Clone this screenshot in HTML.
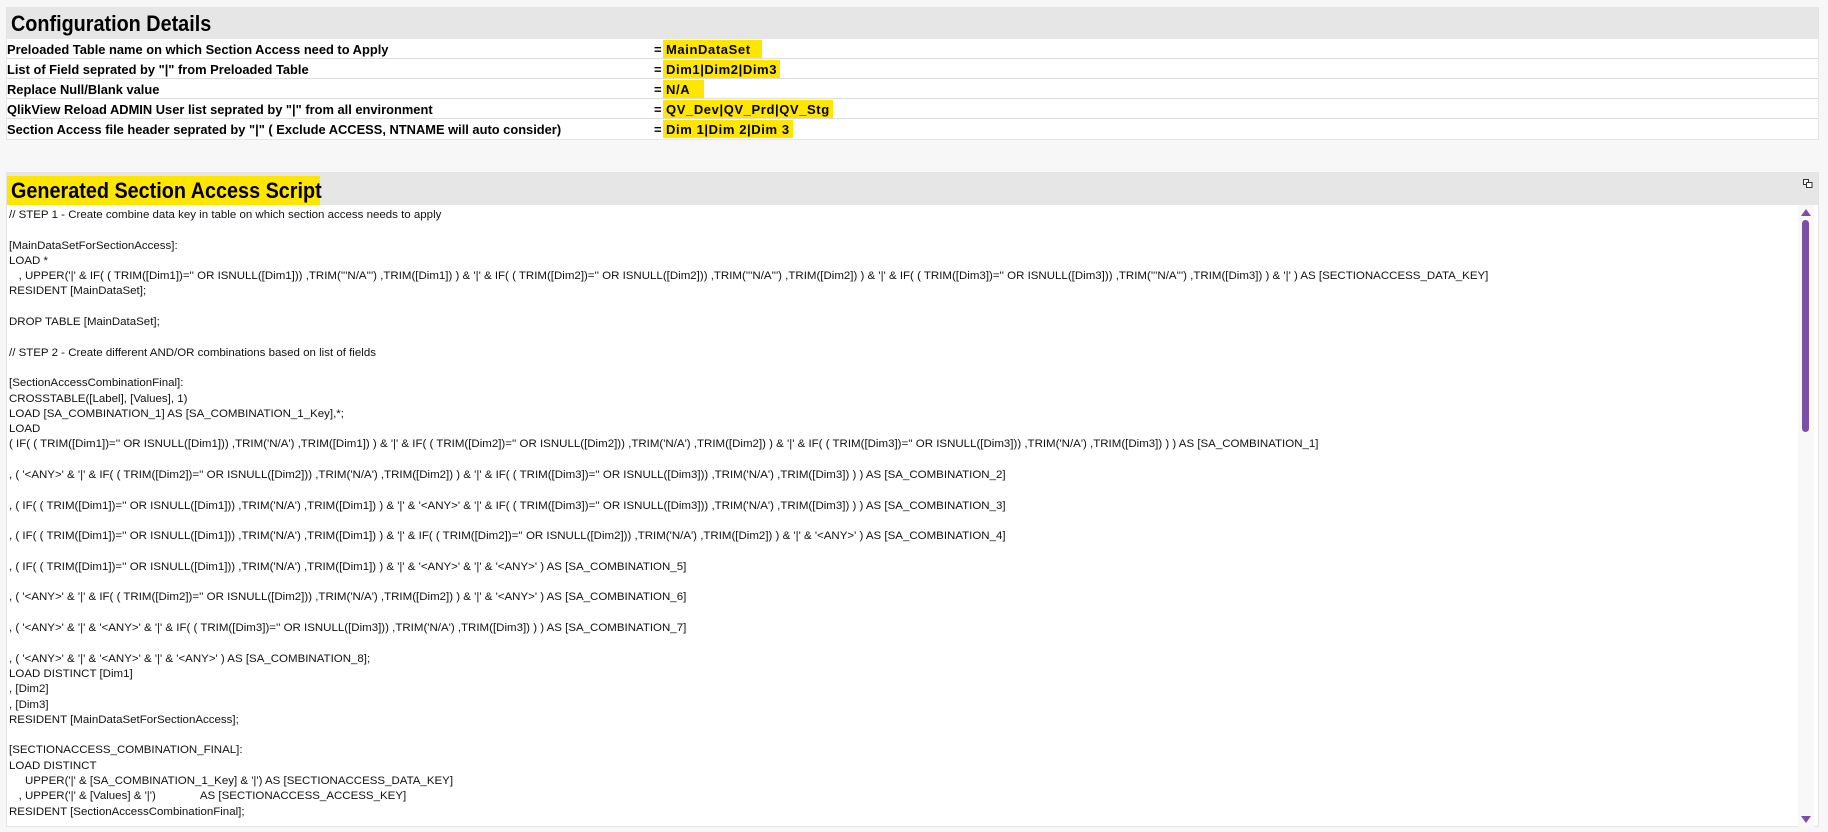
<!DOCTYPE html>
<html><head><meta charset="utf-8"><style>
*{margin:0;padding:0;box-sizing:border-box}
body{width:1828px;height:832px;background:#f7f7f7;font-family:"Liberation Sans",sans-serif;color:#000;position:relative;overflow:hidden}
.p1{position:absolute;left:6px;top:7px;width:1813px;height:133px;background:#fff;border:1px solid #e4e4e4}
.h{background:#e6e6e6;height:31px;position:relative}
.h1t{position:absolute;left:4px;top:3px;font-size:22px;font-weight:bold;transform:scaleX(.9);transform-origin:left}
.row{height:20px;border-bottom:1px solid #dcdcdc;position:relative;font-size:13px;font-weight:bold}
.row:last-child{border-bottom:none}
.lab{position:absolute;left:0;top:3px;transform:scaleX(.99);transform-origin:left;white-space:nowrap}
.eq{position:absolute;left:647px;top:3px}
.val{position:absolute;left:656px;top:1px;height:18px;background:#ffe600;padding:2px 3px 0 3px;white-space:nowrap;letter-spacing:.6px}
.p2{position:absolute;left:6px;top:172px;width:1813px;height:655px;background:#fff;border:1px solid #e4e4e4}
.h2{background:#e6e6e6;height:32px;position:relative}
.h2t{position:absolute;left:0;top:3px;height:29px;width:313px;background:#ffe600;}
.h2t span{position:absolute;left:4px;top:2px;font-size:22px;font-weight:bold;transform:scaleX(.9);transform-origin:left;white-space:nowrap}
pre{position:absolute;left:2px;top:35px;font-family:"Liberation Sans",sans-serif;font-size:11px;line-height:15.3px;white-space:pre;transform:scaleX(1.045);transform-origin:left top;color:#111}
.sb{position:absolute;left:1791px;top:32px;width:16px;height:622px;background:#f8f8f8}
.thumb{position:absolute;left:4px;top:15px;width:7px;height:212px;background:#7b4fa6;border-radius:4px}
.up{position:absolute;left:3px;top:4px;width:0;height:0;border-left:5px solid transparent;border-right:5px solid transparent;border-bottom:7px solid #7b4fa6}
.dn{position:absolute;left:3px;bottom:4px;width:0;height:0;border-left:5px solid transparent;border-right:5px solid transparent;border-top:7px solid #7b4fa6}
</style></head><body>
<div class="p1">
<div class="h"><div class="h1t">Configuration Details</div></div>
<div class="row"><span class="lab">Preloaded Table name on which Section Access need to Apply</span><span class="eq">=</span><span class="val" style="width:99px">MainDataSet</span></div>
<div class="row"><span class="lab">List of Field seprated by "|" from Preloaded Table</span><span class="eq">=</span><span class="val">Dim1|Dim2|Dim3</span></div>
<div class="row"><span class="lab">Replace Null/Blank value</span><span class="eq">=</span><span class="val" style="width:41px">N/A</span></div>
<div class="row"><span class="lab">QlikView Reload ADMIN User list seprated by "|" from all environment</span><span class="eq">=</span><span class="val">QV_Dev|QV_Prd|QV_Stg</span></div>
<div class="row"><span class="lab">Section Access file header seprated by "|" ( Exclude ACCESS, NTNAME will auto consider)</span><span class="eq">=</span><span class="val">Dim 1|Dim 2|Dim 3</span></div>
</div>
<div class="p2">
<div class="h2"><div class="h2t"><span>Generated Section Access Script</span></div>
<svg style="position:absolute;left:1796px;top:6px" width="10" height="10" viewBox="0 0 10 10"><rect x="0.5" y="0.5" width="5" height="5" fill="#fff" stroke="#333"/><rect x="3.5" y="3.5" width="5.5" height="5" fill="#fff" stroke="#333"/></svg></div>
<pre>// STEP 1 - Create combine data key in table on which section access needs to apply

[MainDataSetForSectionAccess]:
LOAD *
   , UPPER('|' &amp; IF( ( TRIM([Dim1])='' OR ISNULL([Dim1])) ,TRIM('''N/A''') ,TRIM([Dim1]) ) &amp; '|' &amp; IF( ( TRIM([Dim2])='' OR ISNULL([Dim2])) ,TRIM('''N/A''') ,TRIM([Dim2]) ) &amp; '|' &amp; IF( ( TRIM([Dim3])='' OR ISNULL([Dim3])) ,TRIM('''N/A''') ,TRIM([Dim3]) ) &amp; '|' ) AS [SECTIONACCESS_DATA_KEY]
RESIDENT [MainDataSet];

DROP TABLE [MainDataSet];

// STEP 2 - Create different AND/OR combinations based on list of fields

[SectionAccessCombinationFinal]:
CROSSTABLE([Label], [Values], 1)
LOAD [SA_COMBINATION_1] AS [SA_COMBINATION_1_Key],*;
LOAD
( IF( ( TRIM([Dim1])='' OR ISNULL([Dim1])) ,TRIM('N/A') ,TRIM([Dim1]) ) &amp; '|' &amp; IF( ( TRIM([Dim2])='' OR ISNULL([Dim2])) ,TRIM('N/A') ,TRIM([Dim2]) ) &amp; '|' &amp; IF( ( TRIM([Dim3])='' OR ISNULL([Dim3])) ,TRIM('N/A') ,TRIM([Dim3]) ) ) AS [SA_COMBINATION_1]

, ( '&lt;ANY&gt;' &amp; '|' &amp; IF( ( TRIM([Dim2])='' OR ISNULL([Dim2])) ,TRIM('N/A') ,TRIM([Dim2]) ) &amp; '|' &amp; IF( ( TRIM([Dim3])='' OR ISNULL([Dim3])) ,TRIM('N/A') ,TRIM([Dim3]) ) ) AS [SA_COMBINATION_2]

, ( IF( ( TRIM([Dim1])='' OR ISNULL([Dim1])) ,TRIM('N/A') ,TRIM([Dim1]) ) &amp; '|' &amp; '&lt;ANY&gt;' &amp; '|' &amp; IF( ( TRIM([Dim3])='' OR ISNULL([Dim3])) ,TRIM('N/A') ,TRIM([Dim3]) ) ) AS [SA_COMBINATION_3]

, ( IF( ( TRIM([Dim1])='' OR ISNULL([Dim1])) ,TRIM('N/A') ,TRIM([Dim1]) ) &amp; '|' &amp; IF( ( TRIM([Dim2])='' OR ISNULL([Dim2])) ,TRIM('N/A') ,TRIM([Dim2]) ) &amp; '|' &amp; '&lt;ANY&gt;' ) AS [SA_COMBINATION_4]

, ( IF( ( TRIM([Dim1])='' OR ISNULL([Dim1])) ,TRIM('N/A') ,TRIM([Dim1]) ) &amp; '|' &amp; '&lt;ANY&gt;' &amp; '|' &amp; '&lt;ANY&gt;' ) AS [SA_COMBINATION_5]

, ( '&lt;ANY&gt;' &amp; '|' &amp; IF( ( TRIM([Dim2])='' OR ISNULL([Dim2])) ,TRIM('N/A') ,TRIM([Dim2]) ) &amp; '|' &amp; '&lt;ANY&gt;' ) AS [SA_COMBINATION_6]

, ( '&lt;ANY&gt;' &amp; '|' &amp; '&lt;ANY&gt;' &amp; '|' &amp; IF( ( TRIM([Dim3])='' OR ISNULL([Dim3])) ,TRIM('N/A') ,TRIM([Dim3]) ) ) AS [SA_COMBINATION_7]

, ( '&lt;ANY&gt;' &amp; '|' &amp; '&lt;ANY&gt;' &amp; '|' &amp; '&lt;ANY&gt;' ) AS [SA_COMBINATION_8];
LOAD DISTINCT [Dim1]
, [Dim2]
, [Dim3]
RESIDENT [MainDataSetForSectionAccess];

[SECTIONACCESS_COMBINATION_FINAL]:
LOAD DISTINCT
     UPPER('|' &amp; [SA_COMBINATION_1_Key] &amp; '|') AS [SECTIONACCESS_DATA_KEY]
   , UPPER('|' &amp; [Values] &amp; '|')              AS [SECTIONACCESS_ACCESS_KEY]
RESIDENT [SectionAccessCombinationFinal];</pre>
<div class="sb"><div class="up"></div><div class="thumb"></div><div class="dn"></div></div>
</div>
</body></html>
